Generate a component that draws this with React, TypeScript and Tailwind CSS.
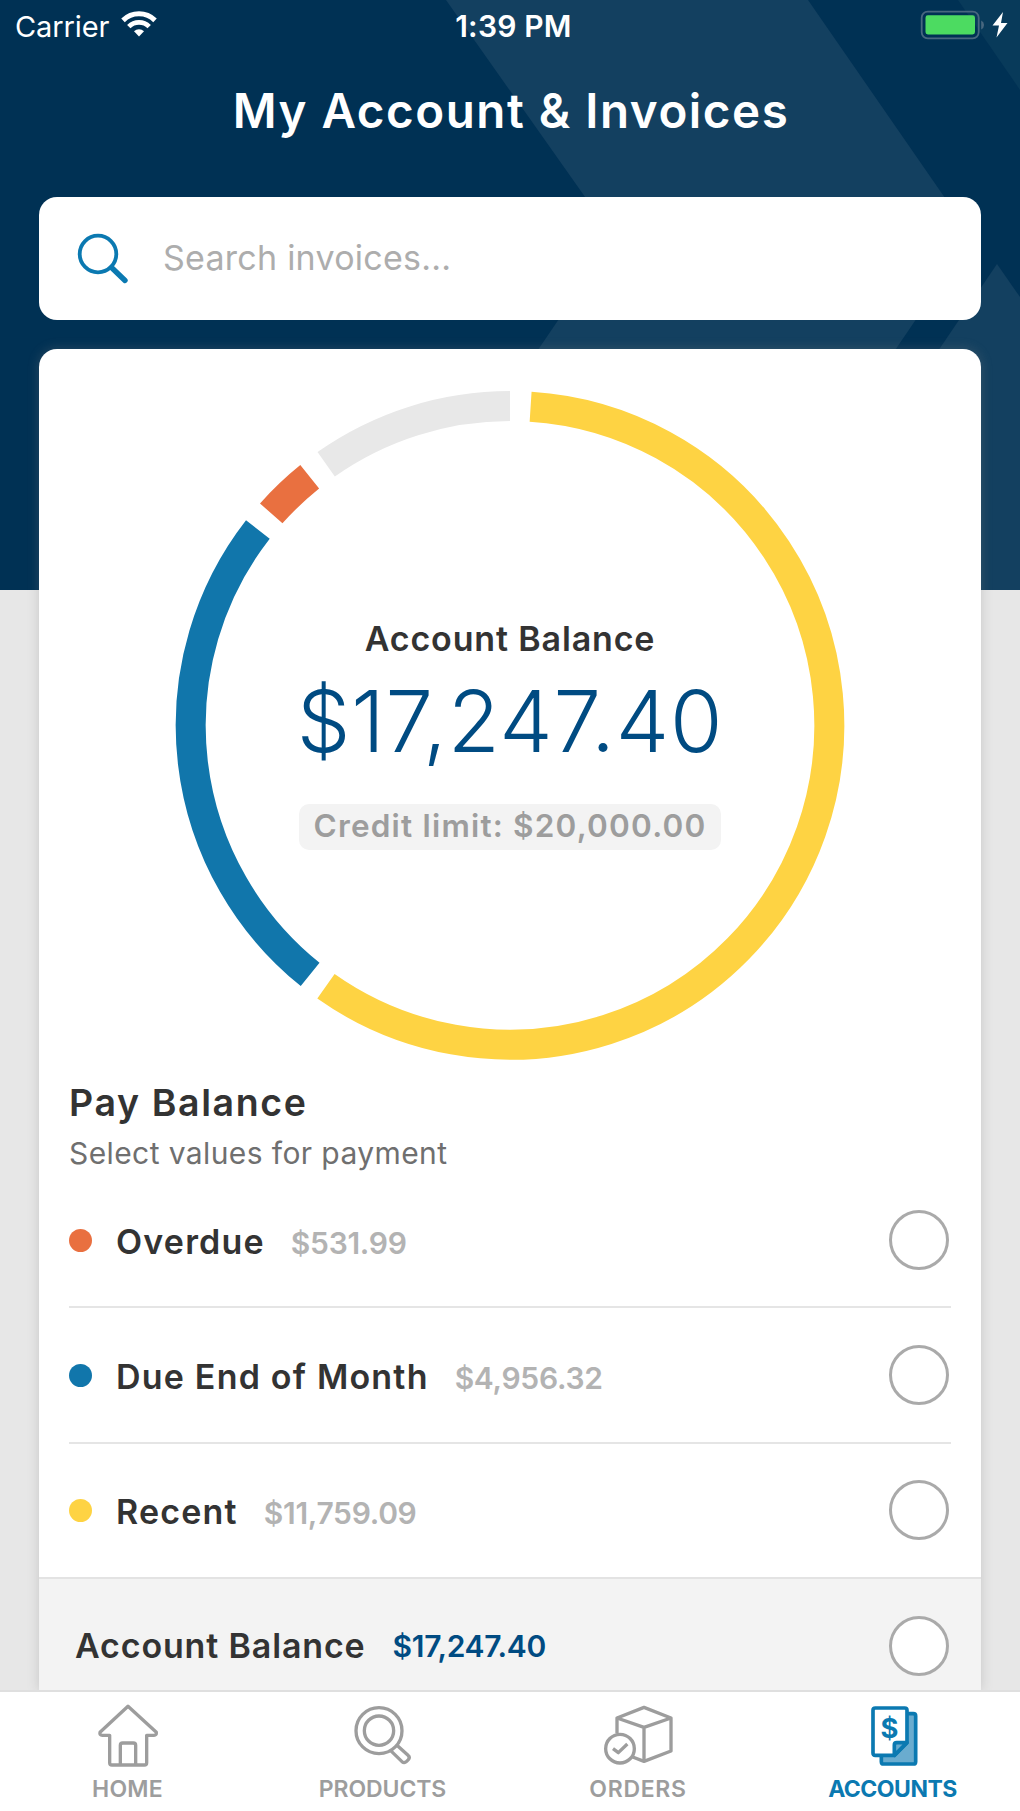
import React from 'react';

interface BalanceItem {
  label: string;
  amount: string;
  dot: string;
}

const items: BalanceItem[] = [
  { label: 'Overdue', amount: '$531.99', dot: 'bg-[#e97040]' },
  { label: 'Due End of Month', amount: '$4,956.32', dot: 'bg-[#1176ab]' },
  { label: 'Recent', amount: '$11,759.09', dot: 'bg-[#fed343]' },
];

// angles are degrees clockwise from 12 o'clock
const segments = [
  { start: 3.7, end: 215.2, color: '#fed343' },
  { start: 218.75, end: 307.85, color: '#1176ab' },
  { start: 311.6, end: 321.15, color: '#e97040' },
  { start: 324.85, end: 360, color: '#e8e8e8' },
];

const CENTER_X = 335;
const CENTER_Y = 334.4;
const RADIUS = 319.3;

const arcPath = (start: number, end: number) => {
  const point = (deg: number) => {
    const rad = (deg * Math.PI) / 180;
    return `${(CENTER_X + RADIUS * Math.sin(rad)).toFixed(2)} ${(CENTER_Y - RADIUS * Math.cos(rad)).toFixed(2)}`;
  };
  return `M${point(start)} A${RADIUS} ${RADIUS} 0 ${end - start > 180 ? 1 : 0} 1 ${point(end)}`;
};

const HeaderBackground = () => (
  <svg className="absolute inset-x-0 top-0 h-[590px] w-full" viewBox="0 0 1020 590" fill="none">
    <rect width="1020" height="590" fill="#003154" />
    <path d="M446 0H808L972 237L732 590H375L614 238Z" fill="#134060" />
    <path d="M997 264L1020 297V590H776Z" fill="#134060" />
    <path d="M958 0H1020V90Z" fill="#083a5a" />
  </svg>
);

const StatusBar = () => (
  <div className="grid h-[50px] grid-cols-3 items-center pt-0.5 pr-3 pl-[15px] text-[30px] leading-none text-white">
    <div className="flex items-center gap-3">
      <span className="text-[29px] tracking-[-0.1px]">Carrier</span>
      <svg className="-mt-1 h-[26px] w-9" viewBox="0 0 36 26" fill="none" stroke="white">
        <path d="M2 9.4a22.8 22.8 0 0 1 32 0" strokeWidth="5" />
        <path d="M7.8 15.6a14.6 14.6 0 0 1 20.4 0" strokeWidth="4.8" />
        <path d="M18 25.4l-5-5.2a7.2 7.2 0 0 1 10 0z" fill="white" stroke="none" />
      </svg>
    </div>
    <span className="pl-1 text-center font-semibold tracking-[0.2px]">1:39 PM</span>
    <div className="-mt-0.5 flex items-center justify-end gap-1.5">
      <svg className="h-[30px] w-[66px]" viewBox="0 0 66 30" fill="none">
        <rect x="1.7" y="1.7" width="57" height="26.6" rx="6" stroke="#48677f" strokeWidth="1.8" />
        <rect x="5.5" y="5.3" width="49.5" height="19.2" rx="2.4" fill="#4cdb61" />
        <path d="M61.2 10.5a5 5 0 0 1 0 9z" fill="#48677f" />
      </svg>
      <svg className="h-[26px] w-4" viewBox="0 0 16 26" fill="white">
        <path d="M11 0L0.5 13.6H7L4.5 25.5L15.5 11H9z" />
      </svg>
    </div>
  </div>
);

const Radio = () => <span className="size-[60px] shrink-0 rounded-full border-3 border-[#aaaaaa] bg-white" />;

const BalanceChart = () => (
  <div className="relative mx-auto h-[670px] w-[670px]">
    <svg className="size-full" viewBox="0 0 670 670" fill="none">
      {segments.map((s) => (
        <path key={s.color} d={arcPath(s.start, s.end)} stroke={s.color} strokeWidth="30" />
      ))}
    </svg>
    <div className="absolute inset-0 flex flex-col items-center pt-[228px]">
      <div className="text-[34px] leading-10 font-semibold tracking-[0.85px] text-[#333333]">Account Balance</div>
      <div className="mt-3 text-[85px] leading-[102px] font-light tracking-[0.7px] text-[#004b82]">$17,247.40</div>
      <div className="mt-[31px] flex h-[46px] w-[422px] items-center justify-center rounded-[10px] bg-[#f3f3f3] pb-0.5 text-[31.5px] font-semibold tracking-[1.2px] whitespace-nowrap text-[#9d9d9d]">
        Credit limit: $20,000.00
      </div>
    </div>
  </div>
);

const HomeIcon = () => (
  <svg className="h-[70px] w-20" viewBox="0 0 240 210" fill="none" stroke="currentColor" strokeWidth="10" strokeLinejoin="round">
    <path d="M120 19L205 97Q206 106 198 106H176V188Q176 195 169 195H72Q65 195 65 188V106H43Q34 106 36 97Z" />
    <path d="M97 194V136Q97 129 104 129H136Q143 129 143 136V194" />
  </svg>
);

const ProductsIcon = () => (
  <svg className="h-[70px] w-20" viewBox="0 0 240 210" fill="none" stroke="currentColor" strokeWidth="10" strokeLinejoin="round">
    <circle cx="108" cy="92" r="69" />
    <circle cx="108" cy="92" r="44" />
    <path d="M143 152L177 185Q184 191 191 184L196 179Q202 172 195 166L161 135" />
  </svg>
);

const OrdersIcon = () => (
  <svg className="h-[70px] w-20" viewBox="0 0 240 210" fill="none" stroke="currentColor" strokeWidth="10" strokeLinejoin="round">
    <path d="M57 100V54L138 22L219 54V153L138 184L104 171" />
    <path d="M57 54L138 82L219 54M138 82V184" />
    <circle cx="66" cy="146" r="43" />
    <path d="M45 146L61 158L88 132" />
  </svg>
);

const AccountsIcon = () => (
  <svg className="h-[70px] w-20" viewBox="0 0 240 210" fill="none" stroke="currentColor" strokeWidth="11" strokeLinejoin="round">
    <path d="M85 48Q85 41 92 41H181Q188 41 188 48V185Q188 192 181 192H92Q85 192 85 185Z" fill="#6aaccf" />
    <path d="M60 31Q60 24 67 24H155Q162 24 162 31V128L124 166H67Q60 166 60 159Z" fill="white" />
    <path d="M162 128H131Q124 128 124 135V166Z" fill="#6aaccf" />
    <text x="109" y="114" textAnchor="middle" fontSize="82" fontWeight="700" fill="currentColor" stroke="none">$</text>
  </svg>
);

const tabs = [
  { label: 'HOME', icon: <HomeIcon />, className: 'text-[#9d9d9d]', labelClass: 'font-semibold tracking-[0.2px]' },
  { label: 'PRODUCTS', icon: <ProductsIcon />, className: 'text-[#9d9d9d]', labelClass: 'font-semibold tracking-[-0.1px]' },
  { label: 'ORDERS', icon: <OrdersIcon />, className: 'text-[#9d9d9d]', labelClass: 'pl-px font-semibold tracking-[0.7px]' },
  { label: 'ACCOUNTS', icon: <AccountsIcon />, className: 'text-[#0b79b1]', labelClass: 'font-bold tracking-[-0.5px]' },
];

const TabBar = () => (
  <nav className="relative grid h-[121px] shrink-0 grid-cols-4 border-t-2 border-[#dfdfdf] bg-white">
    {tabs.map((tab) => (
      <div key={tab.label} className={`flex flex-col items-center pt-2 ${tab.className}`}>
        {tab.icon}
        <span className={`mt-[5px] text-[23px] leading-7 ${tab.labelClass}`}>{tab.label}</span>
      </div>
    ))}
  </nav>
);

const App: React.FC = () => {
  return (
    <div className="relative flex h-[1811px] w-[1020px] flex-col overflow-hidden bg-[#e7e7e7] font-['Inter',sans-serif]">
      <HeaderBackground />

      <div className="relative flex min-h-0 flex-1 flex-col">
        <StatusBar />
        <h1 className="mt-[31px] pl-0.5 text-center text-[47.5px] leading-[60px] font-semibold tracking-[1.55px] text-white">
          My Account &amp; Invoices
        </h1>

        <div className="mx-[39px] mt-[56px] flex h-[123px] shrink-0 items-center rounded-[18px] bg-white pl-[38px]">
          <svg className="h-[52px] w-[52px]" viewBox="0 0 52 52" fill="none" stroke="#0b79b1">
            <circle cx="21" cy="21" r="18.3" strokeWidth="3.8" />
            <path d="M34.5 34.5L48 47.5" strokeWidth="5.4" strokeLinecap="round" />
          </svg>
          <input
            className="mb-0.5 ml-[34px] flex-1 bg-transparent text-[34px] tracking-[0.25px] outline-none placeholder:text-[#adadad]"
            placeholder="Search invoices..."
          />
        </div>

        <section className="mx-[39px] mt-[29px] flex min-h-0 flex-1 flex-col rounded-t-[18px] bg-white pt-[42px] shadow-[0_0_12px_rgba(128,128,128,0.32)]">
          <BalanceChart />

          <div className="-mb-0.5 px-[30px]">
            <h2 className="mt-[18px] text-[37.5px] leading-[48px] font-semibold tracking-[1.6px] text-[#333333]">Pay Balance</h2>
            <p className="mt-1.5 text-[30px] leading-10 tracking-[0.4px] text-[#6f6f6f]">Select values for payment</p>

            {items.map((item) => (
              <div key={item.label} className="flex h-[135.3px] items-center border-b-2 border-[#e5e5e5] pr-0.5 last:border-transparent">
                <span className={`mt-px size-[23px] rounded-full ${item.dot}`} />
                <span className="mt-[3px] ml-6 text-[34px] font-semibold tracking-[1.2px] text-[#333333]">{item.label}</span>
                <span className="mt-[7px] ml-[26px] text-[30px] font-semibold tracking-[-0.3px] text-[#b3b3b3]">{item.amount}</span>
                <span className="flex-1" />
                <Radio />
              </div>
            ))}
          </div>

          <div className="flex h-[140px] items-start border-t-2 border-[#e3e3e3] bg-[#f3f3f3] pt-[37px] pr-[32px] pl-9">
            <div className="flex h-[60px] items-center">
              <span className="text-[34px] font-semibold tracking-[0.85px] text-[#333333]">Account Balance</span>
              <span className="mt-0.5 ml-[27px] text-[30px] font-semibold tracking-[-0.3px] text-[#004b82]">$17,247.40</span>
            </div>
            <span className="flex-1" />
            <Radio />
          </div>
        </section>
      </div>

      <TabBar />
    </div>
  );
};

export default App;
